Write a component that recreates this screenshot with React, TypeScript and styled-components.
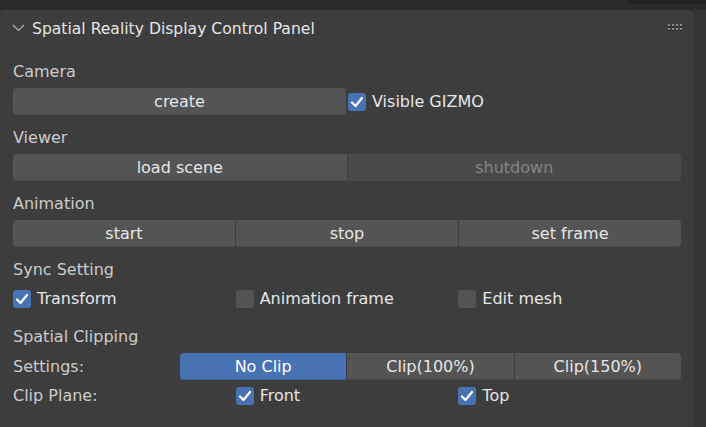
import React from 'react';
import styled, { createGlobalStyle } from 'styled-components';

const GlobalStyle = createGlobalStyle`
  html, body {
    margin: 0;
    padding: 0;
    background: #2b2b2b;
    font-family: "DejaVu Sans", "Liberation Sans", sans-serif;
  }
`;

const Screen = styled.div`
  display: flex;
  flex-direction: column;
  height: 427px;
  overflow: hidden;
`;

const TopStrip = styled.div`
  height: 10px;
  display: flex;
  justify-content: flex-end;
`;

const Tab = styled.div`
  width: 77px;
  height: 4px;
  background: #222222;
  border-bottom-left-radius: 4px;
`;

const Main = styled.div`
  flex: 1;
  display: flex;
`;

const Panel = styled.section`
  width: 694px;
  background: #3d3d3d;
  border-radius: 4px 6px 0 0;
`;

const Side = styled.div`
  flex: 1;
  background: #353535;
`;

const Header = styled.header`
  height: 38px;
  display: flex;
  align-items: center;
  padding: 0 10px 0 12px;
`;

const Title = styled.span`
  flex: 1;
  font-size: 15.6px;
  line-height: 20px;
  color: #e6e6e6;
`;

const Body = styled.div`
  padding: 14px 13px 0 13px;
  display: flex;
  flex-direction: column;
`;

const Section = styled.div<{ $gap?: number }>`
  margin-bottom: ${p => p.$gap ?? 13}px;
`;

const Label = styled.div`
  font-size: 16px;
  line-height: 20px;
  color: #cccccc;
  margin-bottom: 6px;
`;

const Split = styled.div`
  display: grid;
  grid-template-columns: 1fr 1fr;
  column-gap: 2px;
  align-items: center;
`;

const Group = styled.div<{ $cols: number }>`
  display: grid;
  grid-template-columns: repeat(${p => p.$cols}, 1fr);
  column-gap: 1px;
`;

const Button = styled.button<{ $disabled?: boolean; $active?: boolean }>`
  height: 27px;
  border: none;
  margin: 0;
  padding: 0;
  font-family: inherit;
  font-size: 16px;
  line-height: 20px;
  color: ${p => (p.$disabled ? '#858585' : p.$active ? '#ffffff' : '#e6e6e6')};
  background: ${p => (p.$active ? '#4772b3' : p.$disabled ? '#4a4a4a' : '#545454')};
  box-shadow: inset 0 -1px 0 ${p => (p.$active ? '#3f65a0' : '#4a4a4a')};
  border-radius: 4px;
  ${Group} > & {
    border-radius: 0;
  }
  ${Group} > &:first-child {
    border-radius: 4px 0 0 4px;
  }
  ${Group} > &:last-child {
    border-radius: 0 4px 4px 0;
  }
`;

const CheckRow = styled.div<{ $top?: number }>`
  display: grid;
  grid-template-columns: repeat(3, 1fr);
  align-items: center;
  height: 24px;
  padding-top: 1px;
  margin-top: ${p => p.$top ?? 0}px;
`;

const Check = styled.label`
  display: flex;
  align-items: center;
  gap: 6px;
  font-size: 16px;
  line-height: 20px;
  color: #e6e6e6;
`;

const Box = styled.span<{ $on: boolean }>`
  width: 18px;
  height: 18px;
  border-radius: 3px;
  background: ${p => (p.$on ? '#4772b3' : '#545454')};
  display: flex;
  align-items: center;
  justify-content: center;
`;

const FieldRow = styled.div`
  display: grid;
  grid-template-columns: 167px 1fr;
  align-items: center;
`;

const FieldLabel = styled.span`
  font-size: 16px;
  line-height: 20px;
  color: #cccccc;
`;

const Chevron = () => (
  <svg width="13" height="8" viewBox="0 0 13 8" style={{ marginRight: 7, marginBottom: 3 }}>
    <polyline points="1,1 6.5,6.5 12,1" fill="none" stroke="#b0b0b0" strokeWidth="1.2" />
  </svg>
);

const Grip = () => (
  <svg width="16" height="8" viewBox="0 0 16 8" style={{ marginBottom: 2 }}>
    {[0, 1].map(r =>
      [0, 1, 2, 3].map(c => (
        <g key={`${r}-${c}`}>
          <rect x={c * 4} y={r * 4 + 1} width="2" height="2" fill="#1e1e1e" />
          <rect x={c * 4} y={r * 4} width="2" height="2" fill="#8c8c8c" />
        </g>
      ))
    )}
  </svg>
);

const Tick = () => (
  <svg width="18" height="18" viewBox="0 0 18 18">
    <polyline points="4,9.5 7.5,13 14,5" fill="none" stroke="#ffffff" strokeWidth="2.2" strokeLinecap="round" strokeLinejoin="round" />
  </svg>
);

const CheckBox = ({ on, text }: { on: boolean; text: string }) => (
  <Check>
    <Box $on={on}>{on && <Tick />}</Box>
    {text}
  </Check>
);

const App = () => (
  <>
    <GlobalStyle />
    <Screen>
      <TopStrip>
        <Tab />
      </TopStrip>
      <Main>
        <Panel>
          <Header>
            <Chevron />
            <Title>Spatial Reality Display Control Panel</Title>
            <Grip />
          </Header>
          <Body>
            <Section>
              <Label>Camera</Label>
              <Split>
                <Button>create</Button>
                <CheckBox on text="Visible GIZMO" />
              </Split>
            </Section>
            <Section>
              <Label>Viewer</Label>
              <Group $cols={2}>
                <Button>load scene</Button>
                <Button $disabled>shutdown</Button>
              </Group>
            </Section>
            <Section>
              <Label>Animation</Label>
              <Group $cols={3}>
                <Button>start</Button>
                <Button>stop</Button>
                <Button>set frame</Button>
              </Group>
            </Section>
            <Section $gap={16}>
              <Label>Sync Setting</Label>
              <CheckRow>
                <CheckBox on text="Transform" />
                <CheckBox on={false} text="Animation frame" />
                <CheckBox on={false} text="Edit mesh" />
              </CheckRow>
            </Section>
            <Section>
              <Label>Spatial Clipping</Label>
              <FieldRow>
                <FieldLabel>Settings:</FieldLabel>
                <Group $cols={3}>
                  <Button $active>No Clip</Button>
                  <Button>Clip(100%)</Button>
                  <Button>Clip(150%)</Button>
                </Group>
              </FieldRow>
              <CheckRow $top={3}>
                <FieldLabel>Clip Plane:</FieldLabel>
                <CheckBox on text="Front" />
                <CheckBox on text="Top" />
              </CheckRow>
            </Section>
          </Body>
        </Panel>
        <Side />
      </Main>
    </Screen>
  </>
);

export default App;
